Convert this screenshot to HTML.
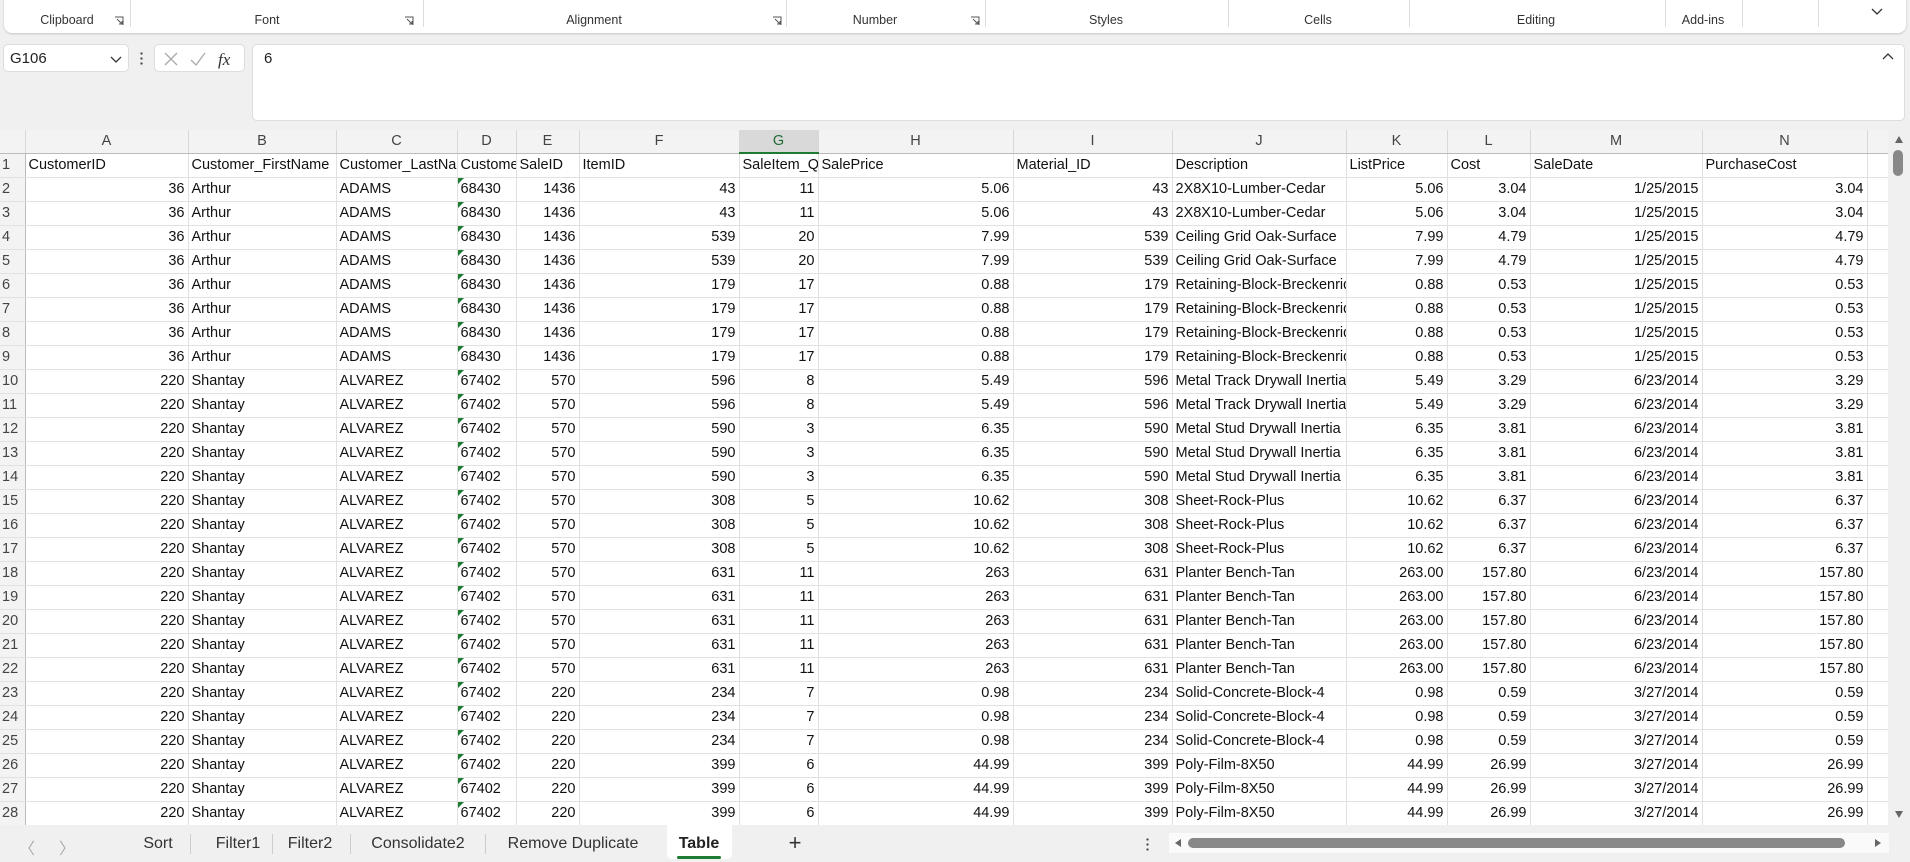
<!DOCTYPE html>
<html><head><meta charset="utf-8">
<style>
*{box-sizing:border-box;margin:0;padding:0}
body{width:1910px;height:862px;overflow:hidden;background:#f0f0f0;font-family:"Liberation Sans",sans-serif;position:relative;color:#222}
.ribbon{position:absolute;left:4px;top:-10px;width:1902px;height:43px;background:#fff;border-radius:0 0 8px 8px;box-shadow:0 1px 2px rgba(0,0,0,.18)}
.rl{position:absolute;top:14px;font-size:12.5px;color:#333;transform:translateX(-50%)}
.sep{position:absolute;top:0;width:1px;height:27px;background:#ddd}
.box{position:absolute;background:#fff;border:1px solid #ddd;border-radius:5px}
table{position:absolute;left:0;top:130px;width:1888px;border-collapse:collapse;table-layout:fixed;font-size:14.5px;background:#fff}
td{height:24px;border-right:1px solid #e1e1e1;border-bottom:1px solid #e1e1e1;white-space:nowrap;overflow:hidden;padding:0 3px;text-overflow:clip;color:#111}
tr.h td{height:23px;background:#f3f3f3;text-align:center;color:#444;border-color:#d8d8d8;border-bottom:1px solid #bbb}
td.rh{background:#f3f3f3;color:#444;padding-left:2px;border-right:1px solid #bbb;border-bottom-color:#e1e1e1}
.r{text-align:right}
.tg{position:relative}
.tg:before{content:"";position:absolute;left:0;top:0;border-top:6px solid #1e7b34;border-right:6px solid transparent}
.tabs{position:absolute;left:0;top:825px;width:1910px;height:37px;background:#f0f0f0;font-size:16px;color:#333}
.tab{position:absolute;top:10px;transform:translateX(-50%)}
.ts{position:absolute;top:9px;width:1px;height:20px;background:#ccc}
</style></head><body>
<div class="ribbon">
<span class="rl" style="left:63px;top:23px">Clipboard</span>
<span class="rl" style="left:263px;top:23px">Font</span>
<span class="rl" style="left:590px;top:23px">Alignment</span>
<span class="rl" style="left:871px;top:23px">Number</span>
<span class="rl" style="left:1102px;top:23px">Styles</span>
<span class="rl" style="left:1314px;top:23px">Cells</span>
<span class="rl" style="left:1532px;top:23px">Editing</span>
<span class="rl" style="left:1699px;top:23px">Add-ins</span>
<div class="sep" style="left:126px;top:10px"></div><div class="sep" style="left:419px;top:10px"></div><div class="sep" style="left:782px;top:10px"></div><div class="sep" style="left:981px;top:10px"></div><div class="sep" style="left:1224px;top:10px"></div><div class="sep" style="left:1405px;top:10px"></div><div class="sep" style="left:1661px;top:10px"></div><div class="sep" style="left:1738px;top:10px"></div><div class="sep" style="left:1814px;top:10px"></div>
<svg style="position:absolute;left:110px;top:26px" width="10" height="10"><path d="M1 1H9V9M3 3L8 8M8 5V8H5" stroke="#555" fill="none"/></svg>
<svg style="position:absolute;left:400px;top:26px" width="10" height="10"><path d="M1 1H9V9M3 3L8 8M8 5V8H5" stroke="#555" fill="none"/></svg>
<svg style="position:absolute;left:768px;top:26px" width="10" height="10"><path d="M1 1H9V9M3 3L8 8M8 5V8H5" stroke="#555" fill="none"/></svg>
<svg style="position:absolute;left:966px;top:26px" width="10" height="10"><path d="M1 1H9V9M3 3L8 8M8 5V8H5" stroke="#555" fill="none"/></svg>
<svg style="position:absolute;left:1867px;top:18px" width="12" height="8"><path d="M1 1L6 6L11 1" stroke="#333" fill="none" stroke-width="1.3"/></svg>
</div>
<div class="box" style="left:3px;top:44px;width:126px;height:28px"><span style="position:absolute;left:6px;top:5px;font-size:15px">G106</span><svg style="position:absolute;left:106px;top:11px" width="12" height="8"><path d="M1 1L6 6L11 1" stroke="#333" fill="none" stroke-width="1.3"/></svg></div>
<div style="position:absolute;left:140px;top:51px;width:3px;height:14px;background:radial-gradient(circle,#444 1px,transparent 1.3px) 0 0/3px 5px"></div>
<div class="box" style="left:154px;top:44px;width:91px;height:28px"><svg style="position:absolute;left:8px;top:6px" width="80" height="18"><path d="M2 2L14 14M14 2L2 14" stroke="#aaa" stroke-width="1.3"/><path d="M28 9L33 14L42 2" stroke="#aaa" stroke-width="1.3" fill="none"/><text x="55" y="14" font-family="Liberation Serif" font-style="italic" font-size="17" fill="#333">fx</text></svg></div>
<div class="box" style="left:252px;top:44px;width:1653px;height:77px"><span style="position:absolute;left:11px;top:5px;font-size:15px">6</span><svg style="position:absolute;left:1629px;top:7px" width="12" height="8"><path d="M1 7L6 2L11 7" stroke="#333" fill="none" stroke-width="1.3"/></svg></div>
<table>
<colgroup><col style="width:25px"><col style="width:163px"><col style="width:148px"><col style="width:121px"><col style="width:59px"><col style="width:63px"><col style="width:160px"><col style="width:79px"><col style="width:195px"><col style="width:159px"><col style="width:174px"><col style="width:101px"><col style="width:83px"><col style="width:172px"><col style="width:165px"><col style="width:21px"></colgroup>
<tr class="h"><td style="background:#f3f3f3"></td><td>A</td><td>B</td><td>C</td><td>D</td><td>E</td><td>F</td><td style="background:#d9d9d9;border-bottom:2px solid #1e7b34;color:#1e6b34">G</td><td>H</td><td>I</td><td>J</td><td>K</td><td>L</td><td>M</td><td>N</td><td></td></tr>
<tr><td class="rh">1</td><td>CustomerID</td><td>Customer_FirstName</td><td>Customer_LastName</td><td>CustomerID</td><td>SaleID</td><td>ItemID</td><td>SaleItem_Qty</td><td>SalePrice</td><td>Material_ID</td><td>Description</td><td>ListPrice</td><td>Cost</td><td>SaleDate</td><td>PurchaseCost</td><td></td></tr>
<tr><td class="rh">2</td><td class="r">36</td><td>Arthur</td><td>ADAMS</td><td class="tg">68430</td><td class="r">1436</td><td class="r">43</td><td class="r">11</td><td class="r">5.06</td><td class="r">43</td><td>2X8X10-Lumber-Cedar</td><td class="r">5.06</td><td class="r">3.04</td><td class="r">1/25/2015</td><td class="r">3.04</td><td></td></tr>
<tr><td class="rh">3</td><td class="r">36</td><td>Arthur</td><td>ADAMS</td><td class="tg">68430</td><td class="r">1436</td><td class="r">43</td><td class="r">11</td><td class="r">5.06</td><td class="r">43</td><td>2X8X10-Lumber-Cedar</td><td class="r">5.06</td><td class="r">3.04</td><td class="r">1/25/2015</td><td class="r">3.04</td><td></td></tr>
<tr><td class="rh">4</td><td class="r">36</td><td>Arthur</td><td>ADAMS</td><td class="tg">68430</td><td class="r">1436</td><td class="r">539</td><td class="r">20</td><td class="r">7.99</td><td class="r">539</td><td>Ceiling Grid Oak-Surface</td><td class="r">7.99</td><td class="r">4.79</td><td class="r">1/25/2015</td><td class="r">4.79</td><td></td></tr>
<tr><td class="rh">5</td><td class="r">36</td><td>Arthur</td><td>ADAMS</td><td class="tg">68430</td><td class="r">1436</td><td class="r">539</td><td class="r">20</td><td class="r">7.99</td><td class="r">539</td><td>Ceiling Grid Oak-Surface</td><td class="r">7.99</td><td class="r">4.79</td><td class="r">1/25/2015</td><td class="r">4.79</td><td></td></tr>
<tr><td class="rh">6</td><td class="r">36</td><td>Arthur</td><td>ADAMS</td><td class="tg">68430</td><td class="r">1436</td><td class="r">179</td><td class="r">17</td><td class="r">0.88</td><td class="r">179</td><td>Retaining-Block-Breckenridge</td><td class="r">0.88</td><td class="r">0.53</td><td class="r">1/25/2015</td><td class="r">0.53</td><td></td></tr>
<tr><td class="rh">7</td><td class="r">36</td><td>Arthur</td><td>ADAMS</td><td class="tg">68430</td><td class="r">1436</td><td class="r">179</td><td class="r">17</td><td class="r">0.88</td><td class="r">179</td><td>Retaining-Block-Breckenridge</td><td class="r">0.88</td><td class="r">0.53</td><td class="r">1/25/2015</td><td class="r">0.53</td><td></td></tr>
<tr><td class="rh">8</td><td class="r">36</td><td>Arthur</td><td>ADAMS</td><td class="tg">68430</td><td class="r">1436</td><td class="r">179</td><td class="r">17</td><td class="r">0.88</td><td class="r">179</td><td>Retaining-Block-Breckenridge</td><td class="r">0.88</td><td class="r">0.53</td><td class="r">1/25/2015</td><td class="r">0.53</td><td></td></tr>
<tr><td class="rh">9</td><td class="r">36</td><td>Arthur</td><td>ADAMS</td><td class="tg">68430</td><td class="r">1436</td><td class="r">179</td><td class="r">17</td><td class="r">0.88</td><td class="r">179</td><td>Retaining-Block-Breckenridge</td><td class="r">0.88</td><td class="r">0.53</td><td class="r">1/25/2015</td><td class="r">0.53</td><td></td></tr>
<tr><td class="rh">10</td><td class="r">220</td><td>Shantay</td><td>ALVAREZ</td><td class="tg">67402</td><td class="r">570</td><td class="r">596</td><td class="r">8</td><td class="r">5.49</td><td class="r">596</td><td>Metal Track Drywall Inertia</td><td class="r">5.49</td><td class="r">3.29</td><td class="r">6/23/2014</td><td class="r">3.29</td><td></td></tr>
<tr><td class="rh">11</td><td class="r">220</td><td>Shantay</td><td>ALVAREZ</td><td class="tg">67402</td><td class="r">570</td><td class="r">596</td><td class="r">8</td><td class="r">5.49</td><td class="r">596</td><td>Metal Track Drywall Inertia</td><td class="r">5.49</td><td class="r">3.29</td><td class="r">6/23/2014</td><td class="r">3.29</td><td></td></tr>
<tr><td class="rh">12</td><td class="r">220</td><td>Shantay</td><td>ALVAREZ</td><td class="tg">67402</td><td class="r">570</td><td class="r">590</td><td class="r">3</td><td class="r">6.35</td><td class="r">590</td><td>Metal Stud Drywall Inertia</td><td class="r">6.35</td><td class="r">3.81</td><td class="r">6/23/2014</td><td class="r">3.81</td><td></td></tr>
<tr><td class="rh">13</td><td class="r">220</td><td>Shantay</td><td>ALVAREZ</td><td class="tg">67402</td><td class="r">570</td><td class="r">590</td><td class="r">3</td><td class="r">6.35</td><td class="r">590</td><td>Metal Stud Drywall Inertia</td><td class="r">6.35</td><td class="r">3.81</td><td class="r">6/23/2014</td><td class="r">3.81</td><td></td></tr>
<tr><td class="rh">14</td><td class="r">220</td><td>Shantay</td><td>ALVAREZ</td><td class="tg">67402</td><td class="r">570</td><td class="r">590</td><td class="r">3</td><td class="r">6.35</td><td class="r">590</td><td>Metal Stud Drywall Inertia</td><td class="r">6.35</td><td class="r">3.81</td><td class="r">6/23/2014</td><td class="r">3.81</td><td></td></tr>
<tr><td class="rh">15</td><td class="r">220</td><td>Shantay</td><td>ALVAREZ</td><td class="tg">67402</td><td class="r">570</td><td class="r">308</td><td class="r">5</td><td class="r">10.62</td><td class="r">308</td><td>Sheet-Rock-Plus</td><td class="r">10.62</td><td class="r">6.37</td><td class="r">6/23/2014</td><td class="r">6.37</td><td></td></tr>
<tr><td class="rh">16</td><td class="r">220</td><td>Shantay</td><td>ALVAREZ</td><td class="tg">67402</td><td class="r">570</td><td class="r">308</td><td class="r">5</td><td class="r">10.62</td><td class="r">308</td><td>Sheet-Rock-Plus</td><td class="r">10.62</td><td class="r">6.37</td><td class="r">6/23/2014</td><td class="r">6.37</td><td></td></tr>
<tr><td class="rh">17</td><td class="r">220</td><td>Shantay</td><td>ALVAREZ</td><td class="tg">67402</td><td class="r">570</td><td class="r">308</td><td class="r">5</td><td class="r">10.62</td><td class="r">308</td><td>Sheet-Rock-Plus</td><td class="r">10.62</td><td class="r">6.37</td><td class="r">6/23/2014</td><td class="r">6.37</td><td></td></tr>
<tr><td class="rh">18</td><td class="r">220</td><td>Shantay</td><td>ALVAREZ</td><td class="tg">67402</td><td class="r">570</td><td class="r">631</td><td class="r">11</td><td class="r">263</td><td class="r">631</td><td>Planter Bench-Tan</td><td class="r">263.00</td><td class="r">157.80</td><td class="r">6/23/2014</td><td class="r">157.80</td><td></td></tr>
<tr><td class="rh">19</td><td class="r">220</td><td>Shantay</td><td>ALVAREZ</td><td class="tg">67402</td><td class="r">570</td><td class="r">631</td><td class="r">11</td><td class="r">263</td><td class="r">631</td><td>Planter Bench-Tan</td><td class="r">263.00</td><td class="r">157.80</td><td class="r">6/23/2014</td><td class="r">157.80</td><td></td></tr>
<tr><td class="rh">20</td><td class="r">220</td><td>Shantay</td><td>ALVAREZ</td><td class="tg">67402</td><td class="r">570</td><td class="r">631</td><td class="r">11</td><td class="r">263</td><td class="r">631</td><td>Planter Bench-Tan</td><td class="r">263.00</td><td class="r">157.80</td><td class="r">6/23/2014</td><td class="r">157.80</td><td></td></tr>
<tr><td class="rh">21</td><td class="r">220</td><td>Shantay</td><td>ALVAREZ</td><td class="tg">67402</td><td class="r">570</td><td class="r">631</td><td class="r">11</td><td class="r">263</td><td class="r">631</td><td>Planter Bench-Tan</td><td class="r">263.00</td><td class="r">157.80</td><td class="r">6/23/2014</td><td class="r">157.80</td><td></td></tr>
<tr><td class="rh">22</td><td class="r">220</td><td>Shantay</td><td>ALVAREZ</td><td class="tg">67402</td><td class="r">570</td><td class="r">631</td><td class="r">11</td><td class="r">263</td><td class="r">631</td><td>Planter Bench-Tan</td><td class="r">263.00</td><td class="r">157.80</td><td class="r">6/23/2014</td><td class="r">157.80</td><td></td></tr>
<tr><td class="rh">23</td><td class="r">220</td><td>Shantay</td><td>ALVAREZ</td><td class="tg">67402</td><td class="r">220</td><td class="r">234</td><td class="r">7</td><td class="r">0.98</td><td class="r">234</td><td>Solid-Concrete-Block-4</td><td class="r">0.98</td><td class="r">0.59</td><td class="r">3/27/2014</td><td class="r">0.59</td><td></td></tr>
<tr><td class="rh">24</td><td class="r">220</td><td>Shantay</td><td>ALVAREZ</td><td class="tg">67402</td><td class="r">220</td><td class="r">234</td><td class="r">7</td><td class="r">0.98</td><td class="r">234</td><td>Solid-Concrete-Block-4</td><td class="r">0.98</td><td class="r">0.59</td><td class="r">3/27/2014</td><td class="r">0.59</td><td></td></tr>
<tr><td class="rh">25</td><td class="r">220</td><td>Shantay</td><td>ALVAREZ</td><td class="tg">67402</td><td class="r">220</td><td class="r">234</td><td class="r">7</td><td class="r">0.98</td><td class="r">234</td><td>Solid-Concrete-Block-4</td><td class="r">0.98</td><td class="r">0.59</td><td class="r">3/27/2014</td><td class="r">0.59</td><td></td></tr>
<tr><td class="rh">26</td><td class="r">220</td><td>Shantay</td><td>ALVAREZ</td><td class="tg">67402</td><td class="r">220</td><td class="r">399</td><td class="r">6</td><td class="r">44.99</td><td class="r">399</td><td>Poly-Film-8X50</td><td class="r">44.99</td><td class="r">26.99</td><td class="r">3/27/2014</td><td class="r">26.99</td><td></td></tr>
<tr><td class="rh">27</td><td class="r">220</td><td>Shantay</td><td>ALVAREZ</td><td class="tg">67402</td><td class="r">220</td><td class="r">399</td><td class="r">6</td><td class="r">44.99</td><td class="r">399</td><td>Poly-Film-8X50</td><td class="r">44.99</td><td class="r">26.99</td><td class="r">3/27/2014</td><td class="r">26.99</td><td></td></tr>
<tr><td class="rh">28</td><td class="r">220</td><td>Shantay</td><td>ALVAREZ</td><td class="tg">67402</td><td class="r">220</td><td class="r">399</td><td class="r">6</td><td class="r">44.99</td><td class="r">399</td><td>Poly-Film-8X50</td><td class="r">44.99</td><td class="r">26.99</td><td class="r">3/27/2014</td><td class="r">26.99</td><td></td></tr>
</table>
<div style="position:absolute;left:1888px;top:130px;width:22px;height:695px;background:#f0f0f0">
<svg style="position:absolute;left:6px;top:4px" width="10" height="10"><path d="M1 9L5 2L9 9Z" fill="#666"/></svg>
<div style="position:absolute;left:5px;top:20px;width:10px;height:26px;background:#888;border-radius:5px"></div>
<svg style="position:absolute;left:6px;top:680px" width="10" height="10"><path d="M1 1L5 8L9 1Z" fill="#666"/></svg>
</div>
<div class="tabs">
<span class="tab" style="left:27px;color:#aaa">&#x2329;</span><span class="tab" style="left:67px;color:#aaa">&#x232A;</span>
<span class="tab" style="left:158px">Sort</span><div class="ts" style="left:190px"></div>
<span class="tab" style="left:238px">Filter1</span><div class="ts" style="left:272px"></div>
<span class="tab" style="left:310px">Filter2</span><div class="ts" style="left:350px"></div>
<span class="tab" style="left:418px">Consolidate2</span><div class="ts" style="left:485px"></div>
<span class="tab" style="left:573px">Remove Duplicate</span>
<div style="position:absolute;left:667px;top:0;width:65px;height:34px;background:#fff;border-radius:0 0 5px 5px"></div>
<span class="tab" style="left:699px;font-weight:bold;color:#222">Table</span>
<div style="position:absolute;left:677px;top:31px;width:44px;height:3px;background:#1e7b34;border-radius:2px"></div>
<span class="tab" style="left:795px;font-size:22px;top:5px">+</span>
<div style="position:absolute;left:1146px;top:12px;width:3px;height:14px;background:radial-gradient(circle,#444 1px,transparent 1.3px) 0 0/3px 5px"></div>
<div style="position:absolute;left:1169px;top:8px;width:720px;height:20px;background:#fafafa"></div>
<svg style="position:absolute;left:1173px;top:13px" width="10" height="10"><path d="M8 1L2 5L8 9Z" fill="#666"/></svg>
<div style="position:absolute;left:1188px;top:13px;width:657px;height:10px;background:#888;border-radius:5px"></div>
<svg style="position:absolute;left:1873px;top:13px" width="10" height="10"><path d="M2 1L8 5L2 9Z" fill="#666"/></svg>
</div>
</body></html>
